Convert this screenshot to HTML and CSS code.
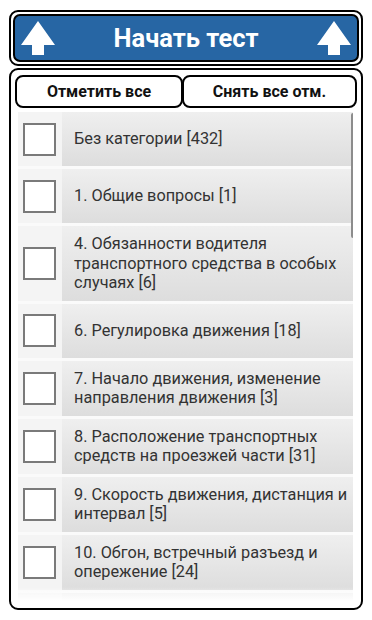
FILE: index.html
```html
<!DOCTYPE html>
<html lang="ru">
<head>
<meta charset="utf-8">
<title>Начать тест</title>
<link rel="stylesheet" href="styles.css">
</head>
<body>
<div class="app">
  <header class="header">
    <button class="start">
      <svg class="arrow" viewBox="0 0 34 34" width="34" height="34"><path d="M17 0 L34 24 L23 24 L23 34 L11 34 L11 24 L0 24 Z" fill="#fff"/></svg>
      <span class="start-title">Начать тест</span>
      <svg class="arrow" viewBox="0 0 34 34" width="34" height="34"><path d="M17 0 L34 24 L23 24 L23 34 L11 34 L11 24 L0 24 Z" fill="#fff"/></svg>
    </button>
  </header>
  <main class="panel">
    <div class="actions">
      <button class="act act-check">Отметить все</button>
      <button class="act act-uncheck">Снять все отм.</button>
    </div>
    <div class="list">
      <div class="row"><div class="cb-col"><span class="cb"></span></div><div class="label">Без категории [432]</div></div>
      <div class="row"><div class="cb-col"><span class="cb"></span></div><div class="label">1. Общие вопросы [1]</div></div>
      <div class="row"><div class="cb-col"><span class="cb"></span></div><div class="label">4. Обязанности водителя транспортного средства в особых случаях [6]</div></div>
      <div class="row"><div class="cb-col"><span class="cb"></span></div><div class="label">6. Регулировка движения [18]</div></div>
      <div class="row"><div class="cb-col"><span class="cb"></span></div><div class="label">7. Начало движения, изменение направления движения [3]</div></div>
      <div class="row"><div class="cb-col"><span class="cb"></span></div><div class="label">8. Расположение транспортных средств на проезжей части [31]</div></div>
      <div class="row"><div class="cb-col"><span class="cb"></span></div><div class="label">9. Скорость движения, дистанция и интервал [5]</div></div>
      <div class="row"><div class="cb-col"><span class="cb"></span></div><div class="label">10. Обгон, встречный разъезд и опережение [24]</div></div>
      <div class="row"><div class="cb-col"></div><div class="label"></div></div>
      <div class="scrollbar"></div>
    </div>
  </main>
</div>
</body>
</html>
```
FILE: styles.css
```css
* { box-sizing: border-box; }
html, body { margin: 0; padding: 0; background: #fff; }
body { font-family: Roboto, "Noto Sans", sans-serif; }

.app {
  padding: 10px 9px 0;
  display: flex;
  flex-direction: column;
  gap: 2px;
}

.header {
  height: 56px;
  border: 2px solid #000;
  border-radius: 9px;
  padding: 2px;
}

.start {
  width: 100%;
  height: 100%;
  margin: 0;
  border: 2px solid #000;
  border-radius: 7px;
  background: #2766a4;
  display: flex;
  align-items: center;
  justify-content: space-between;
  padding: 0 6px 0 6px;
  font-family: inherit;
  cursor: pointer;
}

.arrow { display: block; flex: none; }

.start-title {
  color: #fff;
  font-weight: 700;
  font-size: 25.5px;
}

.panel {
  height: 542px;
  border: 2px solid #000;
  border-radius: 9px;
  padding: 5px 4px 0;
  display: flex;
  flex-direction: column;
}

.actions {
  display: flex;
  height: 33px;
  flex: none;
}

.act {
  margin: 0;
  height: 33px;
  border: 2px solid #000;
  border-radius: 8px;
  background: #fff;
  font-family: inherit;
  font-weight: 700;
  font-size: 16px;
  color: #111;
  padding: 0;
}

.act-check { width: 168px; }
.act-uncheck { flex: 1; margin-left: -1px; }

.list {
  position: relative;
  margin: 4px 4px 0 3px;
  height: 489px;
  overflow: hidden;
  background: #fafafa;
  display: flex;
  flex-direction: column;
  gap: 3px;
}

.list::after {
  content: "";
  position: absolute;
  left: 0;
  right: 0;
  bottom: 0;
  height: 14px;
  background: linear-gradient(to bottom, rgba(255,255,255,0), #fff);
}

.row {
  display: flex;
  flex: none;
  min-height: 54px;
}

.cb-col {
  width: 44px;
  flex: none;
  background: #f4f4f4;
  display: flex;
  align-items: center;
  justify-content: center;
}

.cb {
  width: 33px;
  height: 33px;
  border: 2px solid #7a7a7a;
  background: #fff;
  margin-left: -1px;
}

.label {
  flex: 1;
  display: flex;
  align-items: center;
  padding: 8px 0 8px 12px;
  background: linear-gradient(to bottom, #efefef, #dddddd);
  color: #333;
  font-size: 16.3px;
  line-height: 19.5px;
}

.scrollbar {
  position: absolute;
  right: -2px;
  top: 1px;
  width: 4px;
  height: 125px;
  border-radius: 2px;
  background: #8c8c8c;
}
```
